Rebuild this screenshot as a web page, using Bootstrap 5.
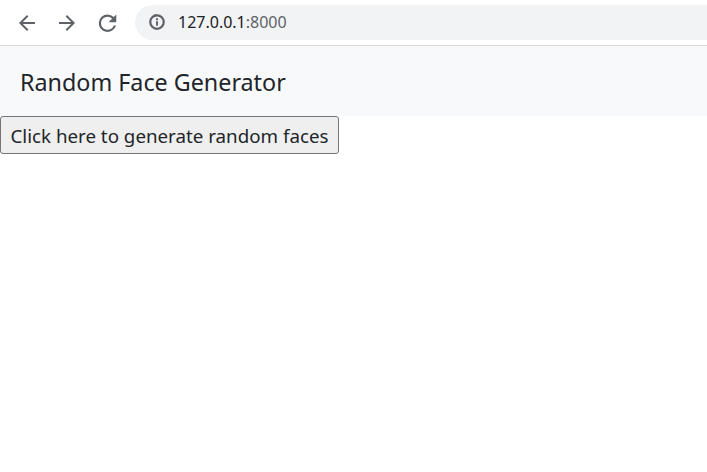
<!DOCTYPE html>
<html lang="en">
<head>
    <meta charset="UTF-8">
    <title>Random Face Generator</title>
    <meta name="viewport" content="width=device-width, initial-scale=1">
    <link href="https://cdn.jsdelivr.net/npm/bootstrap@5.3.3/dist/css/bootstrap.min.css" rel="stylesheet">
    <script src="https://cdn.jsdelivr.net/npm/bootstrap@5.3.3/dist/js/bootstrap.bundle.min.js"></script>
    <style>
        html, body { height: 100%; overflow: hidden; }
        body { background: #fff; font-family: "Noto Sans", "Open Sans", sans-serif; }
        .chrome-bar { height: 46px; background: #fff; border-bottom: 1px solid #d9d9db; padding-left: 15px; }
        .chrome-btn { width: 24px; height: 24px; color: #5f6368; flex: none; }
        .chrome-nav { gap: 16px; margin-right: 16px; }
        .url-pill { height: 35px; margin-top: -1px; background: #f1f3f4; border-radius: 18px 0 0 18px; padding-left: 13px; color: #202124; font-size: 16px; }
        .url-info { width: 18px; height: 18px; color: #5f6368; margin-right: 12px; }
        .url-port { color: #5f6368; }
        .app-nav { height: 70px; background: #f8f9fa; padding: 4px 20px 0; }
        .app-brand { font-size: 23.3px; color: #212529; line-height: 1; }
        .face-btn { display: block; height: 38px; width: 339px; padding: 2px 0 0; background: #efefef; border: 1px solid #767676; border-radius: 3px; font-size: 18.75px; color: #212529; line-height: 1; white-space: nowrap; }
    </style>
</head>
<body>
<div class="chrome-bar d-flex align-items-center">
    <div class="chrome-nav d-flex">
        <svg class="chrome-btn" viewBox="0 0 24 24" fill="currentColor"><path d="M20 11H7.83l5.59-5.59L12 4l-8 8 8 8 1.41-1.41L7.83 13H20v-2z"/></svg>
        <svg class="chrome-btn" viewBox="0 0 24 24" fill="currentColor"><path d="M12 4l-1.41 1.41L16.17 11H4v2h12.17l-5.58 5.59L12 20l8-8z"/></svg>
        <svg class="chrome-btn" viewBox="0.5 0.8 22 22" fill="currentColor"><path d="M17.65 6.35A7.96 7.96 0 0 0 12 4a8 8 0 1 0 7.73 10h-2.08A6 6 0 1 1 12 6c1.66 0 3.14.69 4.22 1.78L13 11h7V4l-2.35 2.35z"/></svg>
    </div>
    <div class="url-pill flex-grow-1 d-flex align-items-center">
        <svg class="url-info" viewBox="0 0 24 24" fill="currentColor"><path fill-rule="evenodd" d="M12 1.5a10.5 10.5 0 1 0 0 21 10.5 10.5 0 0 0 0-21zm0 3a7.5 7.5 0 1 1 0 15 7.5 7.5 0 0 1 0-15zM10.7 7h2.6v2.6h-2.6zm0 4h2.6v6h-2.6z"/></svg>
        <span>127.0.0.1<span class="url-port">:8000</span></span>
    </div>
</div>
<nav class="app-nav d-flex align-items-center">
    <span class="app-brand">Random Face Generator</span>
</nav>
<button type="button" class="face-btn">Click here to generate random faces</button>
</body>
</html>
